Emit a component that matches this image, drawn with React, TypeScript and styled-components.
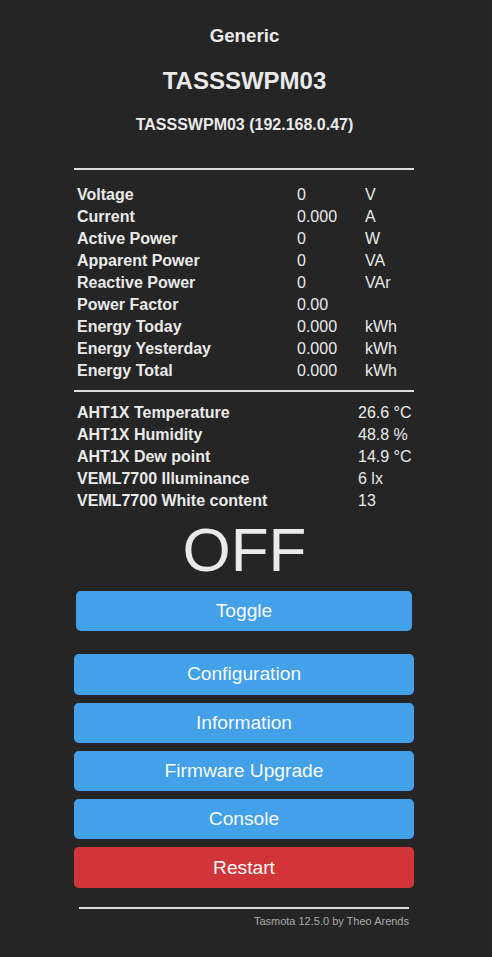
import { Fragment } from "react";
import styled, { createGlobalStyle } from "styled-components";

const GlobalStyle = createGlobalStyle`
  html, body {
    margin: 0;
    padding: 0;
    background: #252525;
  }
  body {
    font-family: "Liberation Sans", Arial, sans-serif;
    color: #eaeaea;
    min-height: 957px;
  }
`;

const Page = styled.div`
  width: 340px;
  margin-left: 74px;
  display: flex;
  flex-direction: column;
  padding-bottom: 30px;
`;

const Header = styled.div`
  display: flex;
  flex-direction: column;
  align-items: center;
  text-align: center;
  margin-left: 1px;
`;

const Module = styled.div`
  margin-top: 25px;
  font-size: 18.72px;
  font-weight: 700;
  line-height: 22px;
`;

const DeviceName = styled.div`
  margin-top: 20px;
  font-size: 24px;
  font-weight: 700;
  line-height: 28px;
`;

const HostLine = styled.div`
  margin-top: 20px;
  font-size: 16px;
  font-weight: 700;
  line-height: 20px;
`;

const Rule = styled.div<{ $top: number; $inset?: number }>`
  height: 2px;
  background: #dcdcdc;
  margin-top: ${({ $top }) => $top}px;
  margin-left: ${({ $inset = 0 }) => $inset}px;
  margin-right: ${({ $inset = 0 }) => $inset}px;
`;

const Table = styled.div<{ $labelWidth: number; $top: number }>`
  display: grid;
  grid-template-columns: ${({ $labelWidth }) => $labelWidth}px 68px 1fr;
  grid-auto-rows: 22px;
  padding-left: 3px;
  margin-top: ${({ $top }) => $top}px;
  font-size: 16px;
  line-height: 22px;
`;

const Label = styled.div`
  font-weight: 700;
  white-space: nowrap;
`;

const Value = styled.div`
  white-space: nowrap;
`;

const State = styled.div`
  margin-top: 7px;
  text-align: center;
  font-size: 62px;
  line-height: 62px;
  margin-left: 1px;
`;

const Button = styled.button<{ $danger?: boolean }>`
  display: block;
  width: 100%;
  height: 40.3px;
  border: 0;
  border-radius: 4.8px;
  background: ${({ $danger }) => ($danger ? "#d13538" : "#42a1e9")};
  color: #fafafa;
  font-family: "Liberation Sans", Arial, sans-serif;
  font-size: 19.2px;
  line-height: 40px;
  padding: 0;
  cursor: pointer;
`;

const ToggleWrap = styled.div`
  padding: 0 2px;
  margin-top: 9.5px;
`;

const Menu = styled.div`
  display: flex;
  flex-direction: column;
  gap: 8px;
  margin-top: 23.5px;
`;

const Footer = styled.div`
  margin: 6px 5px 0;
  text-align: right;
  font-size: 11px;
  line-height: 13px;
  color: #aaaaaa;
`;

const ENERGY = [
  ["Voltage", "0", "V"],
  ["Current", "0.000", "A"],
  ["Active Power", "0", "W"],
  ["Apparent Power", "0", "VA"],
  ["Reactive Power", "0", "VAr"],
  ["Power Factor", "0.00", ""],
  ["Energy Today", "0.000", "kWh"],
  ["Energy Yesterday", "0.000", "kWh"],
  ["Energy Total", "0.000", "kWh"],
];

const SENSORS = [
  ["AHT1X Temperature", "26.6 °C"],
  ["AHT1X Humidity", "48.8 %"],
  ["AHT1X Dew point", "14.9 °C"],
  ["VEML7700 Illuminance", "6 lx"],
  ["VEML7700 White content", "13"],
];

const MENU = ["Configuration", "Information", "Firmware Upgrade", "Console"];

const App = () => {
  return (
    <>
      <GlobalStyle />
      <Page>
        <Header>
          <Module>Generic</Module>
          <DeviceName>TASSSWPM03</DeviceName>
          <HostLine>TASSSWPM03 (192.168.0.47)</HostLine>
        </Header>
        <Rule $top={33} />
        <Table $labelWidth={220} $top={14}>
          {ENERGY.map(([label, value, unit]) => (
            <Fragment key={label}>
              <Label>{label}</Label>
              <Value>{value}</Value>
              <Value>{unit}</Value>
            </Fragment>
          ))}
        </Table>
        <Rule $top={8} />
        <Table $labelWidth={281} $top={10}>
          {SENSORS.map(([label, value]) => (
            <Fragment key={label}>
              <Label>{label}</Label>
              <Value>{value}</Value>
              <Value />
            </Fragment>
          ))}
        </Table>
        <State>OFF</State>
        <ToggleWrap>
          <Button>Toggle</Button>
        </ToggleWrap>
        <Menu>
          {MENU.map((item) => (
            <Button key={item}>{item}</Button>
          ))}
          <Button $danger>Restart</Button>
        </Menu>
        <Rule $top={19} $inset={5} />
        <Footer>Tasmota 12.5.0 by Theo Arends</Footer>
      </Page>
    </>
  );
};

export default App;
